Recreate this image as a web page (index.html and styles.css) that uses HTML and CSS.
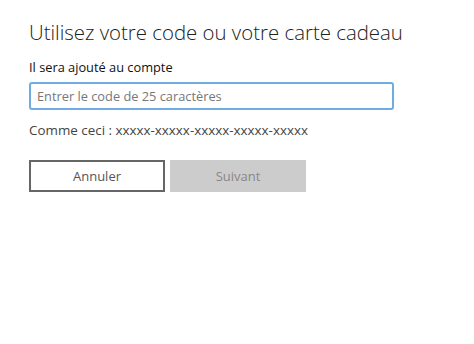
FILE: index.html
```html
<!DOCTYPE html>
<html lang="fr">

<head>
  <meta charset="UTF-8">
  <meta name="viewport" content="width=device-width, initial-scale=1.0">
  <title>Utiliser un code</title>
  <link rel="stylesheet" href="styles.css">
</head>

<body>
  <div class="redeem">
    <h1 class="title">Utilisez votre code ou votre carte cadeau</h1>
    <p class="subtitle">Il sera ajouté au compte</p>
    <input class="code-input" type="text" placeholder="Entrer le code de 25 caractères">
    <p class="hint">Comme ceci : xxxxx-xxxxx-xxxxx-xxxxx-xxxxx</p>
    <div class="actions">
      <button class="btn btn-cancel">Annuler</button>
      <button class="btn btn-next" disabled>Suivant</button>
    </div>
  </div>
</body>

</html>
```

FILE: styles.css
```css
body {
  margin: 0;
  background: #fff;
  font-family: "Open Sans", "Noto Sans", sans-serif;
  color: #222;
}

.redeem {
  padding: 17px 0 0 29px;
  width: 365px;
}

.title {
  margin: 0;
  font-size: 20.4px;
  font-weight: 300;
  line-height: 30px;
  color: #222;
  white-space: nowrap;
}

.subtitle {
  margin: 12px 0 0;
  font-size: 12.8px;
  line-height: 16px;
  color: #111;
}

.code-input {
  display: block;
  box-sizing: border-box;
  width: 365px;
  height: 28px;
  margin-top: 7px;
  padding: 0 6px;
  border: 2px solid #70abe3;
  border-radius: 3px;
  font-family: inherit;
  font-size: 12.8px;
  color: #333;
  outline: none;
}

.code-input::placeholder {
  color: #777;
}

.hint {
  margin: 11px 0 0;
  font-size: 13.4px;
  line-height: 18px;
  color: #444;
}

.actions {
  display: flex;
  gap: 5px;
  margin-top: 21px;
}

.btn {
  box-sizing: border-box;
  width: 136px;
  height: 32px;
  font-family: inherit;
  font-size: 13px;
  border-radius: 0;
}

.btn-cancel {
  background: #fff;
  border: 2px solid #666;
  color: #555;
}

.btn-next {
  background: #ccc;
  border: 2px solid #ccc;
  color: #888;
}
```
